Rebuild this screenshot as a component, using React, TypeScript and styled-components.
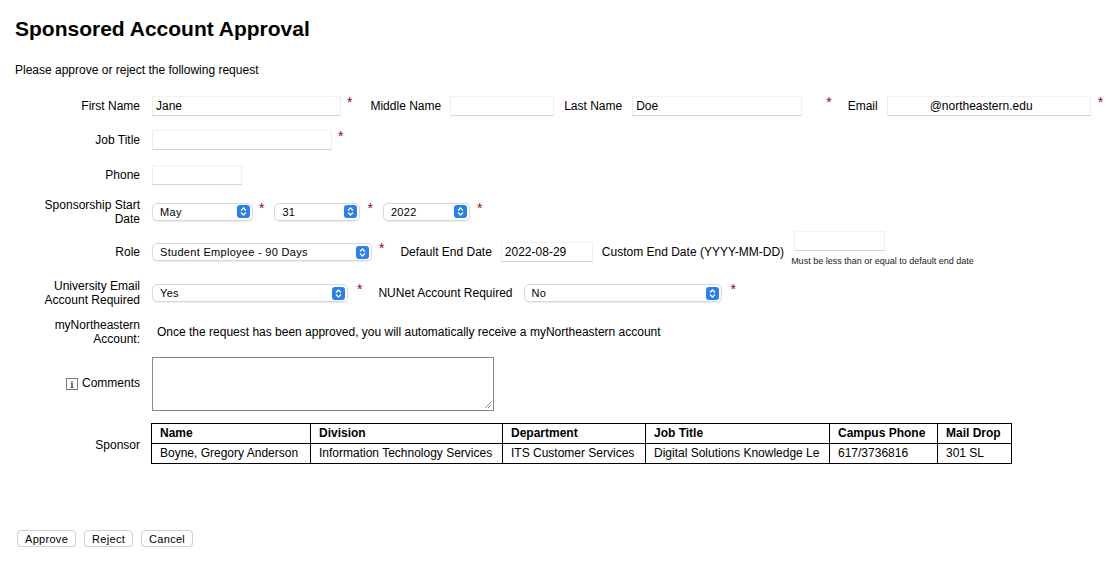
import React from "react";
import styled, { createGlobalStyle } from "styled-components";

const Global = createGlobalStyle`
  body { margin: 0; background: #fff; font-family: "Liberation Sans", Arial, sans-serif; font-size: 12px; color: #000; }
`;

const Page = styled.div`padding: 16px 0 0 15px; width: 1105px;`;
const Title = styled.h1`margin: 0; font-size: 21px; font-weight: bold; line-height: 26px;`;
const Intro = styled.p`margin: 21px 0 0; line-height: 14px;`;
const Form = styled.div`margin-top: 12px; margin-left: -15px;`;
const Row = styled.div<{ h: number }>`
  display: grid; grid-template-columns: 140px 1fr; column-gap: 12px;
  height: ${p => p.h}px; align-items: center;
`;
const Label = styled.div`text-align: right; line-height: 14px;`;
const Content = styled.div`display: flex; align-items: center;`;
const Input = styled.div<{ w: number; ml?: number; center?: boolean }>`
  width: ${p => p.w}px; height: 20px; margin-left: ${p => p.ml ?? 0}px; box-sizing: border-box;
  border: 1px solid #eeeeee; border-bottom-color: #d4d4d4; border-top-color: #f2f2f2;
  padding: 0 3px; display: flex; align-items: center; ${p => p.center ? "padding-left: 42px;" : ""}
`;
const Req = styled.span<{ ml: number }>`
  color: #a50000; margin-left: ${p => p.ml}px; font-size: 14px; margin-bottom: 8px;
`;
const Txt = styled.span<{ ml: number }>`margin-left: ${p => p.ml}px; white-space: nowrap;`;
const Sel = styled.div<{ w: number; ml?: number }>`
  width: ${p => p.w}px; height: 18px; margin-left: ${p => p.ml ?? 0}px; box-sizing: border-box;
  border: 1px solid #d8d8d8; border-radius: 5px; box-shadow: 0 1px 1px rgba(0,0,0,0.08);
  display: flex; align-items: center; justify-content: space-between; padding: 0 2px 0 7px;
  font-size: 11px; letter-spacing: 0.3px;
`;
const Chev = styled.span`
  width: 13px; height: 13px; border-radius: 3px; background: #2a7ef5; display: flex; align-items: center; justify-content: center;
`;
const Stack = styled.div<{ ml: number }>`display: flex; flex-direction: column; margin-left: ${p => p.ml}px; margin-top: -8px;`;
const Hint = styled.span`font-size: 9px; color: #222; margin-top: 5px; margin-left: -3px; white-space: nowrap;`;
const InfoIcon = styled.span`
  display: inline-flex; width: 10px; height: 10px; border: 1px solid #777; font: bold 10px "Liberation Serif", serif;
  color: #1d3b7a; align-items: center; justify-content: center; margin-right: 4px; vertical-align: -1px;
`;
const Area = styled.div`
  width: 342px; height: 54px; box-sizing: border-box; border: 1px solid #8a8a8a; position: relative; margin-top: 2px;
`;
const Grip = styled.svg`position: absolute; right: 1px; bottom: 1px;`;
const Table = styled.table`
  border-collapse: collapse; margin-left: -1px; margin-top: -4px;
  th, td { border: 1px solid #000; padding: 0 8px; height: 19px; text-align: left; white-space: nowrap; font-size: 12px; }
  th { font-weight: bold; }
`;
const Buttons = styled.div`display: flex; gap: 8px; margin: 55px 0 0 2px;`;
const Btn = styled.button`
  font: 11px "Liberation Sans", Arial, sans-serif; background: #fff; border: 1px solid #d0d0d0; border-radius: 4px;
  height: 17px; padding: 0 7px; box-shadow: 0 1px 1px rgba(0,0,0,0.1); letter-spacing: 0.3px;
`;

const Select = ({ w, ml, v }: { w: number; ml?: number; v: string }) => (
  <Sel w={w} ml={ml}>
    <span>{v}</span>
    <Chev>
      <svg width="7" height="9" viewBox="0 0 7 9"><path d="M1 3.5L3.5 1 6 3.5M1 5.5L3.5 8 6 5.5" fill="none" stroke="#fff" strokeWidth="1.3" /></svg>
    </Chev>
  </Sel>
);

const cols = [159, 192, 143, 184, 108, 74];

export default function App() {
  return (
    <Page>
      <Global />
      <Title>Sponsored Account Approval</Title>
      <Intro>Please approve or reject the following request</Intro>
      <Form>
        <Row h={34}>
          <Label>First Name</Label>
          <Content>
            <Input w={189}>Jane</Input><Req ml={6}>*</Req>
            <Txt ml={18}>Middle Name</Txt><Input w={104} ml={9} />
            <Txt ml={10}>Last Name</Txt><Input w={170} ml={10}>Doe</Input><Req ml={24}>*</Req>
            <Txt ml={16}>Email</Txt><Input w={204} ml={9} center>@northeastern.edu</Input><Req ml={7}>*</Req>
          </Content>
        </Row>
        <Row h={34}>
          <Label>Job Title</Label>
          <Content><Input w={180} /><Req ml={6}>*</Req></Content>
        </Row>
        <Row h={35}>
          <Label>Phone</Label>
          <Content><Input w={90} /></Content>
        </Row>
        <Row h={39}>
          <Label>Sponsorship Start<br />Date</Label>
          <Content>
            <Select w={101} v="May" /><Req ml={6}>*</Req>
            <Select w={86} ml={10} v="31" /><Req ml={7}>*</Req>
            <Select w={87} ml={10} v="2022" /><Req ml={7}>*</Req>
          </Content>
        </Row>
        <Row h={42}>
          <Label>Role</Label>
          <Content>
            <Select w={220} v="Student Employee - 90 Days" /><Req ml={7}>*</Req>
            <Txt ml={16}>Default End Date</Txt><Input w={92} ml={9}>2022-08-29</Input>
            <Txt ml={9}>Custom End Date (YYYY-MM-DD)</Txt>
            <Stack ml={10}><Input w={91} /><Hint>Must be less than or equal to default end date</Hint></Stack>
          </Content>
        </Row>
        <Row h={40}>
          <Label>University Email<br />Account Required</Label>
          <Content>
            <Select w={196} v="Yes" /><Req ml={9}>*</Req>
            <Txt ml={16}>NUNet Account Required</Txt>
            <Select w={198} ml={11} v="No" /><Req ml={9}>*</Req>
          </Content>
        </Row>
        <Row h={38}>
          <Label>myNortheastern<br />Account:</Label>
          <Content><Txt ml={5}>Once the request has been approved, you will automatically receive a myNortheastern account</Txt></Content>
        </Row>
        <Row h={64}>
          <Label><InfoIcon>i</InfoIcon>Comments</Label>
          <Content>
            <Area>
              <Grip width="8" height="8" viewBox="0 0 8 8"><path d="M7 1L1 7M7 4L4 7" stroke="#777" strokeWidth="0.8" /></Grip>
            </Area>
          </Content>
        </Row>
        <Row h={60}>
          <Label>Sponsor</Label>
          <Content>
            <Table>
              <colgroup>{cols.map((w, i) => <col key={i} style={{ width: w }} />)}</colgroup>
              <tbody>
                <tr><th>Name</th><th>Division</th><th>Department</th><th>Job Title</th><th>Campus Phone</th><th>Mail Drop</th></tr>
                <tr><td>Boyne, Gregory Anderson</td><td>Information Technology Services</td><td>ITS Customer Services</td><td>Digital Solutions Knowledge Le</td><td>617/3736816</td><td>301 SL</td></tr>
              </tbody>
            </Table>
          </Content>
        </Row>
      </Form>
      <Buttons><Btn>Approve</Btn><Btn>Reject</Btn><Btn>Cancel</Btn></Buttons>
    </Page>
  );
}
